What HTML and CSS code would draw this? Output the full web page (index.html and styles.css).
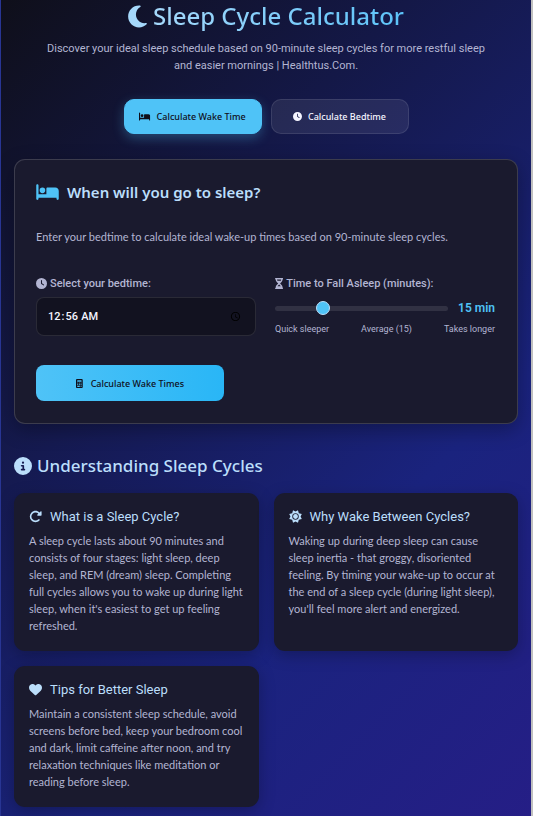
FILE: index.html
```html
<!DOCTYPE html>
<html lang="en">
<head>
    <meta charset="UTF-8">
    <meta name="viewport" content="width=device-width, initial-scale=1.0">
    <title>Sleep Cycle Calculator</title>
    <link rel="stylesheet" href="styles.css">
</head>
<body>
    <!-- Shared icons -->
    <svg class="sprite" aria-hidden="true">
        <symbol id="bed" viewBox="0 0 640 512"><path d="M32 32c17.7 0 32 14.3 32 32V320H288V160c0-17.7 14.3-32 32-32H544c53 0 96 43 96 96V448c0 17.7-14.3 32-32 32s-32-14.3-32-32V416H352 320 64v32c0 17.7-14.3 32-32 32s-32-14.3-32-32V64C0 46.3 14.3 32 32 32zm144 96a80 80 0 1 1 0 160 80 80 0 1 1 0-160z"/></symbol>
        <symbol id="clock" viewBox="0 0 512 512"><path d="M256 0a256 256 0 1 1 0 512A256 256 0 1 1 256 0zM232 120V256c0 8 4 15.5 10.7 20l96 64c11 7.4 25.9 4.4 33.3-6.7s4.4-25.9-6.7-33.3L280 243.2V120c0-13.3-10.7-24-24-24s-24 10.7-24 24z"/></symbol>
    </svg>

    <div class="container">
        <header>
            <h1>
                <svg class="icon moon" viewBox="0 0 384 512"><path d="M223.5 32C100 32 0 132.3 0 256S100 480 223.5 480c60.6 0 115.5-24.2 155.8-63.4c5-4.9 6.3-12.5 3.1-18.7s-10.1-9.7-17-8.5c-9.8 1.7-19.8 2.6-30.1 2.6c-96.9 0-175.5-78.8-175.5-176c0-65.8 36-123.1 89.3-153.3c6.1-3.5 9.2-10.5 7.7-17.3s-7.3-11.9-14.3-12.5c-6.3-.5-12.6-.8-19-.8z"/></svg>
                <span>Sleep Cycle Calculator</span>
            </h1>
            <p class="subtitle">Discover your ideal sleep schedule based on 90-minute sleep cycles for more restful sleep and easier mornings | Healthtus.Com.</p>
        </header>

        <div class="tabs">
            <button type="button" class="tab active"><svg class="icon wide"><use href="#bed"/></svg>Calculate Wake Time</button>
            <button type="button" class="tab"><svg class="icon"><use href="#clock"/></svg>Calculate Bedtime</button>
        </div>

        <main class="calculator">
            <h2><svg class="icon wide"><use href="#bed"/></svg>When will you go to sleep?</h2>
            <p class="intro">Enter your bedtime to calculate ideal wake-up times based on 90-minute sleep cycles.</p>
            <div class="form-row">
                <div class="form-group">
                    <label for="bedtime"><svg class="icon"><use href="#clock"/></svg>Select your bedtime:</label>
                    <input type="time" id="bedtime" value="00:56">
                </div>
                <div class="form-group">
                    <label for="latency"><svg class="icon narrow" viewBox="0 0 384 512"><path d="M32 0C14.3 0 0 14.3 0 32S14.3 64 32 64V75c0 42.4 16.9 83.1 46.9 113.1L146.7 256 78.9 323.9C48.9 353.9 32 394.6 32 437v11c-17.7 0-32 14.3-32 32s14.3 32 32 32H64 320h32c17.7 0 32-14.3 32-32s-14.3-32-32-32V437c0-42.4-16.9-83.1-46.9-113.1L237.3 256l67.9-67.9c30-30 46.9-70.7 46.9-113.1V64c17.7 0 32-14.3 32-32s-14.3-32-32-32H320 64 32zM96 75V64H288V75c0 19-5.6 37.4-16 53H112c-10.3-15.6-16-34-16-53zm16 309c3.5-5.3 7.6-10.3 12.1-14.9L192 301.3l67.9 67.9c4.6 4.6 8.6 9.6 12.1 14.9H112z"/></svg>Time to Fall Asleep (minutes):</label>
                    <div class="slider-row">
                        <input type="range" id="latency" min="1" max="55" value="15">
                        <output id="latency-value" for="latency">15 min</output>
                    </div>
                    <div class="slider-labels">
                        <span>Quick sleeper</span>
                        <span>Average (15)</span>
                        <span>Takes longer</span>
                    </div>
                </div>
            </div>
            <button type="button" class="calculate-btn"><svg class="icon narrow" viewBox="0 0 384 512"><path d="M64 0C28.7 0 0 28.7 0 64V448c0 35.3 28.7 64 64 64H320c35.3 0 64-28.7 64-64V64c0-35.3-28.7-64-64-64H64zM96 64H288c17.7 0 32 14.3 32 32v32c0 17.7-14.3 32-32 32H96c-17.7 0-32-14.3-32-32V96c0-17.7 14.3-32 32-32zm32 160a32 32 0 1 1-64 0 32 32 0 1 1 64 0zM96 352a32 32 0 1 1 0-64 32 32 0 1 1 0 64zM64 416c0-17.7 14.3-32 32-32h96c17.7 0 32 14.3 32 32s-14.3 32-32 32H96c-17.7 0-32-14.3-32-32zM192 256a32 32 0 1 1 0-64 32 32 0 1 1 0 64zm32 64a32 32 0 1 1-64 0 32 32 0 1 1 64 0zm64-64a32 32 0 1 1 0-64 32 32 0 1 1 0 64zm32 64a32 32 0 1 1-64 0 32 32 0 1 1 64 0zM288 448a32 32 0 1 1 0-64 32 32 0 1 1 0 64z"/></svg>Calculate Wake Times</button>
        </main>

        <section class="info">
            <h2><svg class="icon" viewBox="0 0 512 512"><path d="M256 512A256 256 0 1 0 256 0a256 256 0 1 0 0 512zM216 336h24V272H216c-13.3 0-24-10.7-24-24s10.7-24 24-24h48c13.3 0 24 10.7 24 24v88h8c13.3 0 24 10.7 24 24s-10.7 24-24 24H216c-13.3 0-24-10.7-24-24s10.7-24 24-24zm40-208a32 32 0 1 1 0 64 32 32 0 1 1 0-64z"/></svg>Understanding Sleep Cycles</h2>
            <div class="info-grid">
                <article class="info-card">
                    <h3><svg class="icon" viewBox="0 0 512 512"><path d="M463.5 224H472c13.3 0 24-10.7 24-24V72c0-9.7-5.8-18.5-14.8-22.2s-19.3-1.7-26.2 5.2L413.4 96.6c-87.6-86.5-228.7-86.2-315.8 1c-87.5 87.5-87.5 229.3 0 316.8s229.3 87.5 316.8 0c12.5-12.5 12.5-32.8 0-45.3s-32.8-12.5-45.3 0c-62.5 62.5-163.8 62.5-226.3 0s-62.5-163.8 0-226.3c62.2-62.2 162.7-62.5 225.3-1L327 183c-6.9 6.9-8.9 17.2-5.2 26.2s12.5 14.8 22.2 14.8H463.5z"/></svg>What is a Sleep Cycle?</h3>
                    <p>A sleep cycle lasts about 90 minutes and consists of four stages: light sleep, deep sleep, and REM (dream) sleep. Completing full cycles allows you to wake up during light sleep, when it's easiest to get up feeling refreshed.</p>
                </article>
                <article class="info-card">
                    <h3><svg class="icon" viewBox="0 0 512 512"><path fill-rule="evenodd" d="M256 56L354 8 386 126 504 158 456 256 504 354 386 386 354 504 256 456 158 504 126 386 8 354 56 256 8 158 126 126 158 8ZM256 128a128 128 0 1 0 0 256 128 128 0 1 0 0-256ZM256 160a96 96 0 1 1 0 192 96 96 0 1 1 0-192Z"/></svg>Why Wake Between Cycles?</h3>
                    <p>Waking up during deep sleep can cause sleep inertia - that groggy, disoriented feeling. By timing your wake-up to occur at the end of a sleep cycle (during light sleep), you'll feel more alert and energized.</p>
                </article>
                <article class="info-card">
                    <h3><svg class="icon" viewBox="0 0 512 512"><path d="M47.6 300.4L228.3 469.1c7.5 7 17.4 10.9 27.7 10.9s20.2-3.9 27.7-10.9L464.4 300.4c30.4-28.3 47.6-68 47.6-109.5v-5.8c0-69.9-50.5-129.5-119.4-141C347 36.5 300.6 51.4 268 84L256 96 244 84c-32.6-32.6-79-47.5-124.6-39.9C50.5 55.6 0 115.2 0 185.1v5.8c0 41.5 17.2 81.2 47.6 109.5z"/></svg>Tips for Better Sleep</h3>
                    <p>Maintain a consistent sleep schedule, avoid screens before bed, keep your bedroom cool and dark, limit caffeine after noon, and try relaxation techniques like meditation or reading before sleep.</p>
                </article>
            </div>
        </section>
    </div>

    <script>
        const latency = document.getElementById('latency');
        latency.addEventListener('input', function() {
            document.getElementById('latency-value').textContent = latency.value + ' min';
        });
    </script>
</body>
</html>
```
FILE: styles.css
```css
* {
    margin: 0;
    padding: 0;
    box-sizing: border-box;
}
body {
    min-height: 100vh;
    font-family: Roboto, "Noto Sans", sans-serif;
    font-size: 11px;
    line-height: 17px;
    color: #b3b5d2;
    background: linear-gradient(135deg, #0f0f1a 0%, #1a237e 67%, #251e86 100%);
    border-left: 1px solid #283593;
    border-right: 2px solid #c0c0c0;
}
.container {
    padding: 0 13px 9px;
}
.sprite {
    display: none;
}
.icon {
    width: 1em;
    height: 1em;
    fill: currentColor;
    flex: none;
}
.icon.wide {
    width: 1.25em;
}
.icon.narrow {
    width: 0.75em;
}
h1, h2, h3, label, .tab, .calculate-btn {
    display: flex;
    align-items: center;
}
h1, h2, button {
    font-family: "Noto Sans", "Open Sans", sans-serif;
}
.intro, .info-card p {
    font-family: Lato, Roboto, sans-serif;
}
header {
    text-align: center;
}
h1 {
    justify-content: center;
    gap: 6px;
    margin-bottom: 8px;
    font-size: 24px;
    font-weight: 500;
    line-height: 32px;
}
h1 span {
    background: linear-gradient(90deg, #a5d8fb, #5cc3f9);
    -webkit-background-clip: text;
    background-clip: text;
    color: transparent;
}
.moon {
    height: 25px;
    width: 19px;
    color: #a5d8fb;
}
.subtitle {
    max-width: 450px;
    margin: 0 auto 25px;
}
.tabs {
    display: flex;
    justify-content: center;
    gap: 9px;
    margin-bottom: 25px;
}
button {
    justify-content: center;
    font-size: 9px;
    font-weight: 500;
    cursor: pointer;
}
.tab {
    width: 138px;
    height: 35px;
    gap: 6px;
    color: #f5f5ff;
    background: rgba(255, 255, 255, 0.08);
    border: 1px solid rgba(255, 255, 255, 0.1);
    border-radius: 10px;
}
.tab.active {
    color: #0f0f1a;
    background: #4fc3f7;
    border-color: #4fc3f7;
    box-shadow: 0 4px 12px rgba(79, 195, 247, 0.3);
}
.calculator {
    padding: 20px 22px 22px 21px;
    background: #1a1a2e;
    border: 1px solid rgba(255, 255, 255, 0.15);
    border-radius: 11px;
    box-shadow: 0 6px 20px rgba(0, 0, 0, 0.3);
}
.calculator h2 {
    gap: 8px;
    margin-bottom: 24px;
    font-size: 15px;
    font-weight: 600;
    line-height: 24px;
    color: #bbdefb;
}
.calculator h2 .icon {
    width: 23px;
    height: 18px;
    color: #4fc3f7;
}
.intro {
    margin-bottom: 30px;
}
.form-row {
    display: grid;
    grid-template-columns: 1fr 1fr;
    gap: 19px;
    margin-bottom: 27px;
}
label {
    gap: 3px;
    margin-bottom: 5px;
    font-weight: 500;
}
input[type="time"] {
    display: block;
    width: 100%;
    height: 39px;
    padding: 0 10px;
    font-family: inherit;
    font-size: 11px;
    font-weight: 500;
    color: #f5f5ff;
    background: rgba(0, 0, 0, 0.3);
    border: 1px solid rgba(255, 255, 255, 0.1);
    border-radius: 8px;
}
.slider-row {
    display: flex;
    align-items: center;
    gap: 10px;
    height: 22px;
}
input[type="range"] {
    -webkit-appearance: none;
    appearance: none;
    flex: 1;
    min-width: 0;
    height: 5px;
    background: rgba(255, 255, 255, 0.1);
    border-radius: 3px;
}
input[type="range"]::-webkit-slider-thumb {
    -webkit-appearance: none;
    width: 14px;
    height: 14px;
    background: #4fc3f7;
    border: 1px solid #bbdefb;
    border-radius: 50%;
}
output {
    font-size: 12px;
    font-weight: 600;
    color: #4fc3f7;
}
.slider-labels {
    display: flex;
    justify-content: space-between;
    margin-top: 2px;
    font-size: 9px;
}
.calculate-btn {
    width: 188px;
    height: 36px;
    gap: 8px;
    color: #0f0f1a;
    background: linear-gradient(90deg, #4fc3f7, #29b6f6);
    border: none;
    border-radius: 8px;
}
.info {
    margin-top: 30px;
}
.info h2 {
    gap: 5px;
    margin-bottom: 15px;
    font-size: 17px;
    font-weight: 500;
    line-height: 24px;
    color: #bbdefb;
}
.info h2 .icon {
    width: 18px;
    height: 18px;
}
.info-grid {
    display: grid;
    grid-template-columns: 1fr 1fr;
    gap: 15px;
}
.info-card {
    padding: 15px 15px 17px;
    background: #1a1a2e;
    border-radius: 11px;
    box-shadow: 0 4px 16px rgba(0, 0, 0, 0.25);
}
.info-card h3 {
    gap: 8px;
    margin-bottom: 7px;
    font-size: 13px;
    font-weight: 400;
    color: #bbdefb;
}
```
